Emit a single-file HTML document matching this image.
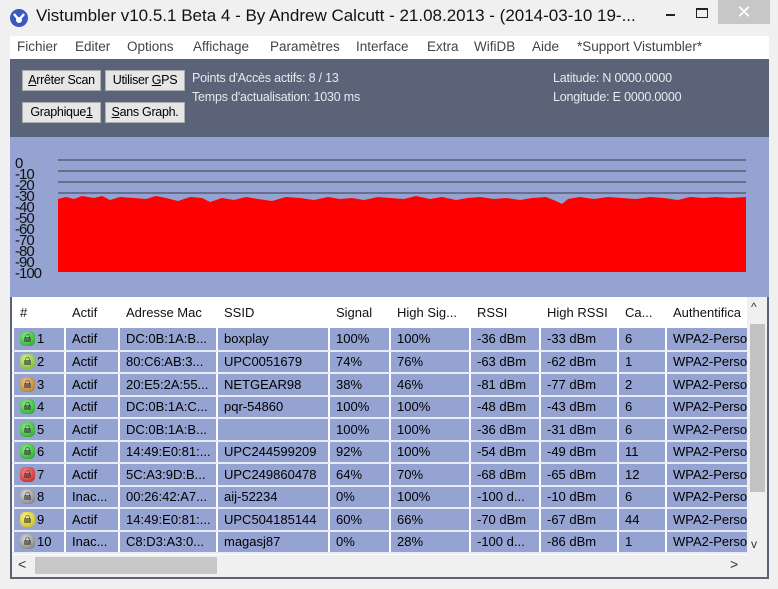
<!DOCTYPE html>
<html><head><meta charset="utf-8"><style>
*{margin:0;padding:0;box-sizing:border-box}
body{width:778px;height:589px;background:#f0f0f0;font-family:"Liberation Sans",sans-serif;position:relative;overflow:hidden;color:#000}
.abs{position:absolute}
.title{left:36px;top:6px;font-size:17px;color:#111;white-space:nowrap}
.menu{left:10px;top:36px;width:759px;height:23px;background:#fff;font-size:13.5px;color:#444}
.menu span{position:absolute;top:3px}
.panel{left:10px;top:59px;width:759px;height:78px;background:#5b6378}
.btn{position:absolute;background:#e6e6e6;border:1px solid #adadad;font-size:12.5px;height:21px;line-height:19px;text-align:center;color:#000;letter-spacing:-0.3px}
.ptxt{position:absolute;color:#e8eaf0;font-size:12.5px;white-space:nowrap;letter-spacing:-0.2px}
.graph{left:10px;top:137px;width:759px;height:160px;background:#95a3d2}
.yl{position:absolute;left:5px;font-size:15px;line-height:15px;color:#111;letter-spacing:-1px}
.list{left:10px;top:297px;width:759px;height:282px;background:#fff;border:2px solid #5b6378;border-top:none}
table{position:absolute;left:0;top:0;border-collapse:collapse;font-size:13px;table-layout:fixed}
td{height:22.5px;padding:0 0 0 6px;white-space:nowrap;overflow:hidden;border:2px solid #fff;border-top:none;border-bottom:2px solid #e8ecf6}
tr.r td{background:#95a3d2}
tr.h td{height:31px;border-bottom:none;color:#111}
.ic{display:inline-block;width:15px;height:15px;border-radius:5px;vertical-align:-3px;margin-right:2px;position:relative}
.ic:after{content:"";position:absolute;left:4px;top:6px;width:7px;height:5px;background:#333;border-radius:1px;opacity:.6}
.ic:before{content:"";position:absolute;left:5px;top:3px;width:3px;height:3px;border:1.5px solid rgba(50,50,50,.6);border-bottom:none;border-radius:3px 3px 0 0}
.g{background:radial-gradient(circle at 40% 35%,#8ef08e,#1a9a1a)}
.lg{background:radial-gradient(circle at 40% 35%,#d6f59a,#6aad1e)}
.o{background:radial-gradient(circle at 40% 35%,#f0c88a,#a86d25)}
.rd{background:radial-gradient(circle at 40% 35%,#ff8a8a,#c01818)}
.gr{background:radial-gradient(circle at 40% 35%,#e0e0e0,#6e6e6e)}
.y{background:radial-gradient(circle at 40% 35%,#fbf58a,#c2b410)}
</style></head><body>
<svg class="abs" style="left:9px;top:8px" width="20" height="20" viewBox="0 0 20 20"><circle cx="10" cy="10" r="9" fill="#3b57c4"/><path d="M5 6 L10 12 L15 6" stroke="#fff" stroke-width="2.5" fill="none"/><circle cx="10" cy="12" r="3" fill="#fff"/></svg>
<div class="abs title">Vistumbler v10.5.1 Beta 4 - By Andrew Calcutt - 21.08.2013 - (2014-03-10 19-...</div>
<div class="abs" style="left:666px;top:14px;width:9px;height:2px;background:#222"></div>
<div class="abs" style="left:696px;top:8px;width:12px;height:10px;border:1px solid #222;border-top-width:2px"></div>
<div class="abs" style="left:718px;top:0;width:52px;height:24px;background:#c7c7c7;color:#fff;text-align:center;font-size:18px;line-height:24px">✕</div>
<div class="abs menu"><span style="left:7px">Fichier</span><span style="left:65px">Editer</span><span style="left:117px">Options</span><span style="left:183px">Affichage</span><span style="left:260px">Paramètres</span><span style="left:346px">Interface</span><span style="left:417px">Extra</span><span style="left:464px">WifiDB</span><span style="left:522px">Aide</span><span style="left:567px">*Support Vistumbler*</span></div>
<div class="abs panel">
<div class="btn" style="left:12px;top:11px;width:79px"><u>A</u>rrêter Scan</div>
<div class="btn" style="left:95px;top:11px;width:80px">Utiliser <u>G</u>PS</div>
<div class="btn" style="left:12px;top:43px;width:79px">Graphique<u>1</u></div>
<div class="btn" style="left:95px;top:43px;width:80px"><u>S</u>ans Graph.</div>
<div class="ptxt" style="left:182px;top:12px">Points d'Accès actifs: 8 / 13</div>
<div class="ptxt" style="left:182px;top:31px">Temps d'actualisation: 1030 ms</div>
<div class="ptxt" style="left:543px;top:12px">Latitude: N 0000.0000</div>
<div class="ptxt" style="left:543px;top:31px">Longitude: E 0000.0000</div>
</div>
<div class="abs graph">
<div class="yl" style="top:19px">0</div><div class="yl" style="top:30px">-10</div><div class="yl" style="top:41px">-20</div><div class="yl" style="top:52px">-30</div><div class="yl" style="top:63px">-40</div><div class="yl" style="top:74px">-50</div><div class="yl" style="top:85px">-60</div><div class="yl" style="top:96px">-70</div><div class="yl" style="top:107px">-80</div><div class="yl" style="top:118px">-90</div><div class="yl" style="top:129px">-100</div>
<svg class="abs" style="left:0;top:0" width="759" height="160">
<g stroke="#4a5066" stroke-width="1.3"><line x1="48" y1="23" x2="736" y2="23"/><line x1="48" y1="34" x2="736" y2="34"/><line x1="48" y1="45" x2="736" y2="45"/><line x1="48" y1="56" x2="736" y2="56"/></g>
<polygon fill="#ff0000" points="48,135 48,62 56,60 64,62 72,59 84,61 92,59 100,63 110,60 124,61 136,62 146,59 156,61 168,64 180,60 192,61 200,65 212,61 224,63 236,60 248,62 262,64 276,60 290,61 304,63 318,60 330,62 342,61 354,63 368,60 380,61 394,62 406,59 420,62 432,60 446,63 458,61 470,60 484,62 496,61 510,63 522,61 536,60 546,64 552,67 558,62 570,60 584,62 598,60 612,61 626,62 640,60 654,61 668,63 680,60 694,61 706,60 720,61 736,60 736,135"/>
</svg>
</div>
<div class="abs list">
<table>
<colgroup><col style="width:52px"><col style="width:54px"><col style="width:98px"><col style="width:112px"><col style="width:61px"><col style="width:80px"><col style="width:70px"><col style="width:78px"><col style="width:48px"><col style="width:82px"></colgroup>
<tr class="h"><td>#</td><td>Actif</td><td>Adresse Mac</td><td>SSID</td><td>Signal</td><td>High Sig...</td><td>RSSI</td><td>High RSSI</td><td>Ca...</td><td>Authentifica</td></tr>
<tr class="r"><td><span class="ic g"></span>1</td><td>Actif</td><td>DC:0B:1A:B...</td><td>boxplay</td><td>100%</td><td>100%</td><td>-36 dBm</td><td>-33 dBm</td><td>6</td><td>WPA2-Perso</td></tr>
<tr class="r"><td><span class="ic lg"></span>2</td><td>Actif</td><td>80:C6:AB:3...</td><td>UPC0051679</td><td>74%</td><td>76%</td><td>-63 dBm</td><td>-62 dBm</td><td>1</td><td>WPA2-Perso</td></tr>
<tr class="r"><td><span class="ic o"></span>3</td><td>Actif</td><td>20:E5:2A:55...</td><td>NETGEAR98</td><td>38%</td><td>46%</td><td>-81 dBm</td><td>-77 dBm</td><td>2</td><td>WPA2-Perso</td></tr>
<tr class="r"><td><span class="ic g"></span>4</td><td>Actif</td><td>DC:0B:1A:C...</td><td>pqr-54860</td><td>100%</td><td>100%</td><td>-48 dBm</td><td>-43 dBm</td><td>6</td><td>WPA2-Perso</td></tr>
<tr class="r"><td><span class="ic g"></span>5</td><td>Actif</td><td>DC:0B:1A:B...</td><td></td><td>100%</td><td>100%</td><td>-36 dBm</td><td>-31 dBm</td><td>6</td><td>WPA2-Perso</td></tr>
<tr class="r"><td><span class="ic g"></span>6</td><td>Actif</td><td>14:49:E0:81:...</td><td>UPC244599209</td><td>92%</td><td>100%</td><td>-54 dBm</td><td>-49 dBm</td><td>11</td><td>WPA2-Perso</td></tr>
<tr class="r"><td><span class="ic rd"></span>7</td><td>Actif</td><td>5C:A3:9D:B...</td><td>UPC249860478</td><td>64%</td><td>70%</td><td>-68 dBm</td><td>-65 dBm</td><td>12</td><td>WPA2-Perso</td></tr>
<tr class="r"><td><span class="ic gr"></span>8</td><td>Inac...</td><td>00:26:42:A7...</td><td>aij-52234</td><td>0%</td><td>100%</td><td>-100 d...</td><td>-10 dBm</td><td>6</td><td>WPA2-Perso</td></tr>
<tr class="r"><td><span class="ic y"></span>9</td><td>Actif</td><td>14:49:E0:81:...</td><td>UPC504185144</td><td>60%</td><td>66%</td><td>-70 dBm</td><td>-67 dBm</td><td>44</td><td>WPA2-Perso</td></tr>
<tr class="r"><td><span class="ic gr"></span>10</td><td>Inac...</td><td>C8:D3:A3:0...</td><td>magasj87</td><td>0%</td><td>28%</td><td>-100 d...</td><td>-86 dBm</td><td>1</td><td>WPA2-Perso</td></tr>
</table>
<div class="abs" style="left:735px;top:0;width:20px;height:258px;background:#f0f0f0"></div>
<div class="abs" style="left:738px;top:27px;width:15px;height:168px;background:#c2c2c2"></div>
<div class="abs" style="left:739px;top:3px;font-size:12px;color:#333">^</div>
<div class="abs" style="left:739px;top:240px;font-size:12px;color:#333">v</div>
<div class="abs" style="left:0;top:258px;width:755px;height:22px;background:#f0f0f0"></div>
<div class="abs" style="left:23px;top:260px;width:182px;height:17px;background:#c7c7c7"></div>
<div class="abs" style="left:6px;top:259px;font-size:14px;color:#333">&lt;</div>
<div class="abs" style="left:718px;top:259px;font-size:14px;color:#333">&gt;</div>
</div>
</body></html>
